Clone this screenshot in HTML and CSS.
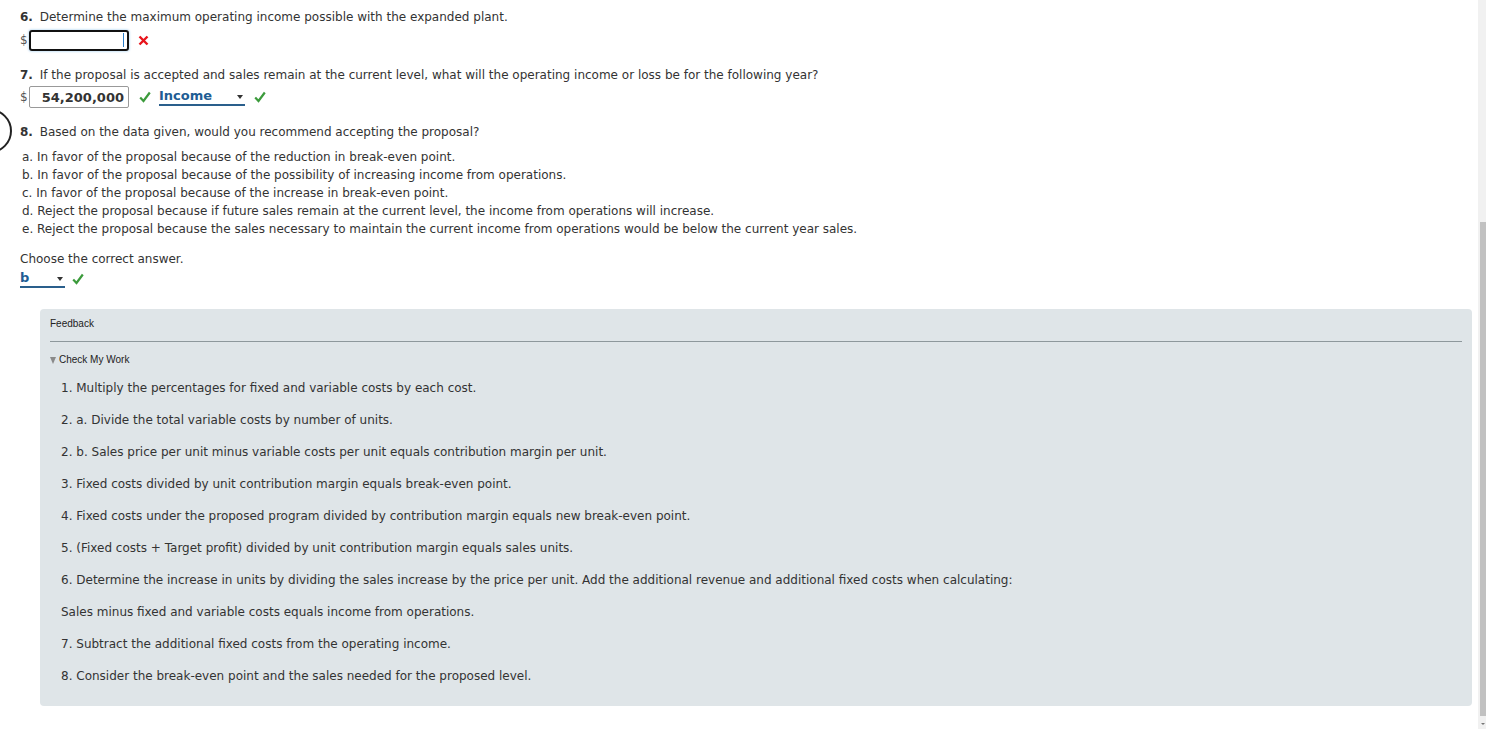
FILE: index.html
```html
<!DOCTYPE html>
<html>
<head>
<meta charset="utf-8">
<link rel="stylesheet" href="styles.css">
</head>
<body>
<div class="page">
  <main class="content">
    <section class="q q6">
      <p class="qtext"><b class="num">6.</b> Determine the maximum operating income possible with the expanded plant.</p>
      <div class="answer-row">
        <span class="dollar">$</span>
        <span class="field field-focus"><span class="caret"></span></span>
        <svg class="mark wrong" width="11" height="11" viewBox="0 0 11 11"><path d="M1.5 1.5 L9.5 9.5 M9.5 1.5 L1.5 9.5" stroke="#e8141b" stroke-width="2.4" fill="none"/></svg>
      </div>
    </section>
    <section class="q q7">
      <p class="qtext"><b class="num">7.</b> If the proposal is accepted and sales remain at the current level, what will the operating income or loss be for the following year?</p>
      <div class="answer-row">
        <span class="dollar">$</span>
        <span class="field field-filled">54,200,000</span>
        <svg class="mark ok ok-first" width="12" height="12" viewBox="0 0 12 12"><path d="M1.2 6.5 L4.5 10 L10.8 1.5" stroke="#3c9b3c" stroke-width="2.2" fill="none"/></svg>
        <span class="dropdown dd-income">Income<span class="arrow"></span></span>
        <svg class="mark ok" width="12" height="12" viewBox="0 0 12 12"><path d="M1.2 6.5 L4.5 10 L10.8 1.5" stroke="#3c9b3c" stroke-width="2.2" fill="none"/></svg>
      </div>
    </section>
    <section class="q q8">
      <span class="focus-ring"></span>
      <p class="qtext"><b class="num">8.</b> Based on the data given, would you recommend accepting the proposal?</p>
      <ul class="options">
        <li>a. In favor of the proposal because of the reduction in break-even point.</li>
        <li>b. In favor of the proposal because of the possibility of increasing income from operations.</li>
        <li class="opt-c">c. In favor of the proposal because of the increase in break-even point.</li>
        <li>d. Reject the proposal because if future sales remain at the current level, the income from operations will increase.</li>
        <li>e. Reject the proposal because the sales necessary to maintain the current income from operations would be below the current year sales.</li>
      </ul>
      <p class="choose">Choose the correct answer.</p>
      <div class="answer-row row-b">
        <span class="dropdown dd-b">b<span class="arrow"></span></span>
        <svg class="mark ok" width="12" height="12" viewBox="0 0 12 12"><path d="M1.2 6.5 L4.5 10 L10.8 1.5" stroke="#3c9b3c" stroke-width="2.2" fill="none"/></svg>
      </div>
    </section>
    <section class="feedback">
      <div class="fb-title">Feedback</div>
      <div class="fb-rule"></div>
      <div class="fb-toggle"><span class="tri"></span>Check My Work</div>
      <ol class="fb-list">
        <li>1. Multiply the percentages for fixed and variable costs by each cost.</li>
        <li>2. a. Divide the total variable costs by number of units.</li>
        <li>2. b. Sales price per unit minus variable costs per unit equals contribution margin per unit.</li>
        <li>3. Fixed costs divided by unit contribution margin equals break-even point.</li>
        <li>4. Fixed costs under the proposed program divided by contribution margin equals new break-even point.</li>
        <li>5. (Fixed costs + Target profit) divided by unit contribution margin equals sales units.</li>
        <li>6. Determine the increase in units by dividing the sales increase by the price per unit. Add the additional revenue and additional fixed costs when calculating:</li>
        <li>Sales minus fixed and variable costs equals income from operations.</li>
        <li>7. Subtract the additional fixed costs from the operating income.</li>
        <li>8. Consider the break-even point and the sales needed for the proposed level.</li>
      </ol>
    </section>
  </main>
  <aside class="scrollbar">
    <div class="sb-space"></div>
    <div class="sb-thumb"></div>
    <div class="sb-arrow"></div>
  </aside>
</div>
</body>
</html>
```

FILE: styles.css
```css
html, body {
  margin: 0;
  padding: 0;
  background: #fff;
  overflow: hidden;
}
body {
  font-family: "DejaVu Sans", Verdana, sans-serif;
  font-size: 12px;
  color: #333;
}
.page {
  display: flex;
  width: 1486px;
  height: 729px;
}
.content {
  flex: 1;
  padding: 8px 6px 0 20px;
  display: flex;
  flex-direction: column;
}
.qtext {
  margin: 0;
  line-height: 18px;
  font-size: 12px;
}
.num {
  font-weight: bold;
  margin-right: 3px;
}
.answer-row {
  display: flex;
  align-items: center;
  height: 22px;
}
.q6 .answer-row { margin-top: 3px; }
.q7 { margin-top: 15px; }
.q7 .answer-row { margin-top: 2px; }
.dollar {
  width: 9px;
  font-size: 12px;
  color: #555;
}
.field {
  box-sizing: border-box;
  width: 100px;
  height: 21px;
  display: flex;
  align-items: center;
  justify-content: flex-end;
}
.field-focus {
  border: 2px solid #111;
  border-radius: 3px;
  box-shadow: 0 0 2px 1px #cfe6f7;
  padding-right: 3px;
}
.caret {
  width: 1px;
  height: 14px;
  background: #2a7cc7;
}
.field-filled {
  height: 22px;
  border: 1px solid #999;
  border-radius: 2px;
  padding-right: 4px;
  font-weight: bold;
  font-size: 13px;
  color: #333;
}
.mark {
  display: block;
  flex: none;
}
.wrong {
  margin-left: 9px;
}
.ok-first {
  margin-left: 10px;
}
.dropdown {
  position: relative;
  box-sizing: border-box;
  display: inline-block;
  color: #1e5d94;
  font-weight: bold;
  font-size: 13px;
  line-height: 16px;
  border-bottom: 2px solid #2a5f8c;
}
.dd-income {
  width: 86px;
  margin-left: 8px;
  margin-right: 9px;
}
.dd-b {
  width: 45px;
  margin-right: 7px;
}
.arrow {
  position: absolute;
  right: 2px;
  top: 7px;
  width: 0;
  height: 0;
  border-left: 3px solid transparent;
  border-right: 3px solid transparent;
  border-top: 4px solid #333;
}
.q8 {
  position: relative;
  margin-top: 15px;
}
.focus-ring {
  position: absolute;
  left: -52px;
  top: -14px;
  width: 40px;
  height: 40px;
  border: 2px solid #222;
  border-radius: 50%;
}
.options {
  list-style: none;
  margin: 7px 0 0 0;
  padding: 0 0 0 2px;
}
.options li {
  line-height: 18px;
  font-size: 12px;
}
.choose {
  margin: 12px 0 0 0;
  line-height: 18px;
}
.row-b {
  height: 18px;
  margin-top: 2px;
}
.feedback {
  margin: 21px 0 0 20px;
  background: #dfe5e8;
  border-radius: 4px;
  height: 397px;
  box-sizing: border-box;
  padding: 9px 10px 0 10px;
  font-family: "Liberation Sans", Arial, sans-serif;
}
.fb-title {
  font-size: 10px;
  color: #222;
  line-height: 12px;
}
.fb-rule {
  height: 1px;
  background: #8e989c;
  margin-top: 11px;
}
.fb-toggle {
  margin-top: 12px;
  font-size: 10px;
  color: #222;
  line-height: 12px;
  display: flex;
  align-items: center;
}
.tri {
  width: 0;
  height: 0;
  border-left: 3px solid transparent;
  border-right: 3px solid transparent;
  border-top: 7px solid #8a8a8a;
  margin-right: 3px;
}
.fb-list {
  list-style: none;
  margin: 13px 0 0 0;
  padding: 0 0 0 11px;
  font-family: "DejaVu Sans", Verdana, sans-serif;
  font-size: 12px;
  color: #333;
}
.fb-list li {
  line-height: 18px;
  margin-bottom: 14px;
}
.scrollbar {
  width: 8px;
  background: #f1f1f1;
  display: flex;
  flex-direction: column;
  align-items: flex-end;
}
.sb-space { height: 222px; }
.sb-thumb {
  width: 6px;
  height: 494px;
  background: #c1c1c1;
}
.sb-arrow {
  margin-top: 7px;
  margin-right: 1px;
  width: 0;
  height: 0;
  border-left: 2px solid transparent;
  border-right: 2px solid transparent;
  border-top: 2px solid #777;
}
```
